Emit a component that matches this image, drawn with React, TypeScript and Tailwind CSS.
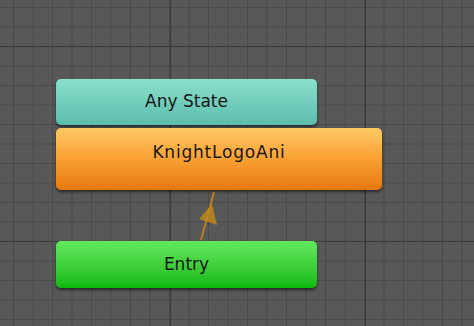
const nodeBase =
  'flex justify-center rounded-[5px] shadow-[0_2px_3px_rgba(0,0,0,0.55)] text-[17px] text-[#161616]';

export default function App() {
  return (
    <div
      className="relative w-[474px] h-[326px] overflow-hidden bg-[#585858] font-['DejaVu_Sans',sans-serif]
        bg-[linear-gradient(to_right,#383838_1px,transparent_1px),linear-gradient(to_bottom,#383838_1px,transparent_1px),linear-gradient(to_right,#4a4a4a_1px,transparent_1px),linear-gradient(to_bottom,#4a4a4a_1px,transparent_1px)]
        [background-size:195px_195px,195px_195px,19.5px_19.5px,19.5px_19.5px]
        [background-position:170px_46px,170px_46px,13px_7px,13px_7px]"
    >
      <div className="flex flex-col items-start pl-[56px] pt-[79px]">
        {/* Any State */}
        <div
          className={`${nodeBase} w-[261px] h-[46px] items-center bg-gradient-to-b from-[#8ae0cb] to-[#5bbdad]`}
        >
          Any State
        </div>

        {/* Default state */}
        <div
          className={`${nodeBase} mt-[3px] w-[326px] h-[62px] pt-[12px] tracking-[0.8px] bg-gradient-to-b from-[#ffc862] via-[#f9a132] to-[#e6770a]`}
        >
          KnightLogoAni
        </div>

        {/* Entry */}
        <div
          className={`${nodeBase} mt-[51px] w-[261px] h-[47px] items-center bg-gradient-to-b from-[#62e95e] to-[#08b808]`}
        >
          Entry
        </div>
      </div>

      {/* transition arrow */}
      <svg className="absolute left-0 top-0" width="474" height="326">
        <line x1="201" y1="240" x2="214" y2="192" stroke="#c48a18" strokeWidth="2" strokeOpacity="0.85" />
        <polygon points="212,204 199,219 217,225" fill="#c48a18" fillOpacity="0.8" />
      </svg>
    </div>
  );
}
